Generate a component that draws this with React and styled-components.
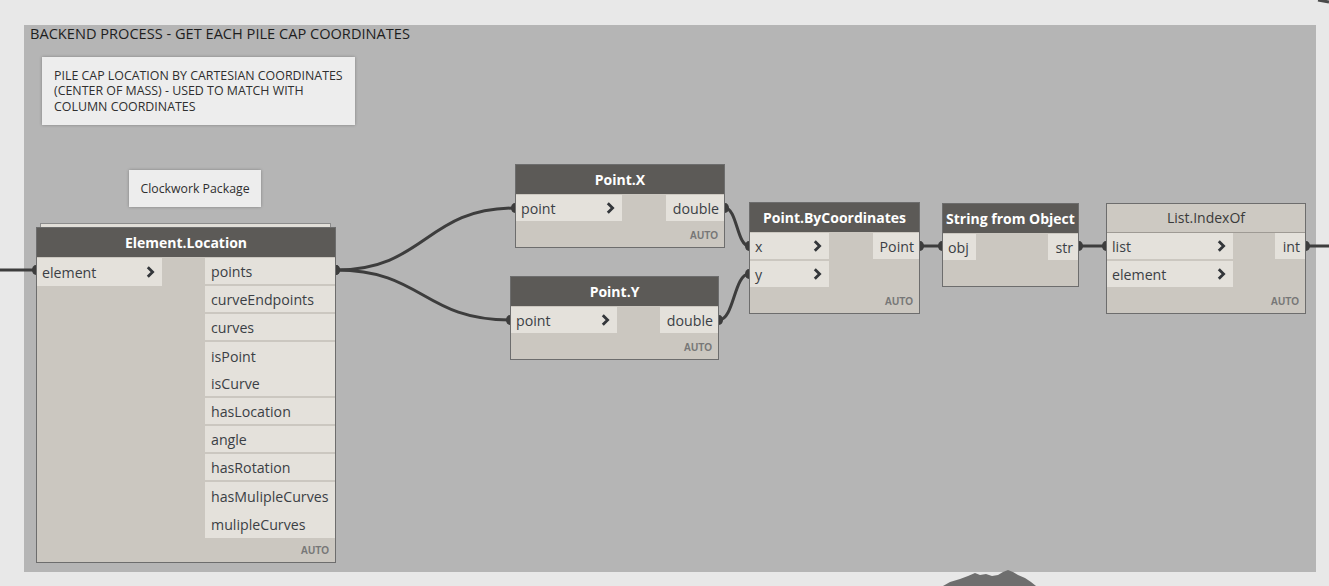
import React from "react";
import styled, { createGlobalStyle } from "styled-components";

const GlobalStyle = createGlobalStyle`
  html, body {
    margin: 0;
    padding: 0;
    background: #e8e8e8;
  }
  * {
    box-sizing: border-box;
  }
`;

const nodes = [
  {
    id: "loc",
    x: 36,
    y: 227,
    w: 300,
    title: "Element.Location",
    stacked: true,
    inW: 125,
    outW: 130,
    outLeft: true,
    auto: true,
    inputs: [{ name: "element" }],
    outputs: [
      { name: "points", sep: true },
      { name: "curveEndpoints", sep: true },
      { name: "curves", sep: true },
      { name: "isPoint" },
      { name: "isCurve", sep: true },
      { name: "hasLocation", sep: true },
      { name: "angle", sep: true },
      { name: "hasRotation", sep: true },
      { name: "hasMulipleCurves" },
      { name: "mulipleCurves" },
    ],
  },
  {
    id: "px",
    x: 515,
    y: 164,
    w: 210,
    title: "Point.X",
    inW: 106,
    outW: 58,
    auto: true,
    inputs: [{ name: "point", sep: true }],
    outputs: [{ name: "double", sep: true }],
  },
  {
    id: "py",
    x: 510,
    y: 276,
    w: 209,
    title: "Point.Y",
    inW: 106,
    outW: 58,
    auto: true,
    inputs: [{ name: "point", sep: true }],
    outputs: [{ name: "double", sep: true }],
  },
  {
    id: "pbc",
    x: 749,
    y: 202,
    w: 171,
    title: "Point.ByCoordinates",
    inW: 79,
    outW: 46,
    auto: true,
    inputs: [
      { name: "x", sep: true },
      { name: "y", sep: true },
    ],
    outputs: [{ name: "Point", sep: true }],
  },
  {
    id: "sfo",
    x: 942,
    y: 203,
    w: 137,
    title: "String from Object",
    inW: 33,
    outW: 30,
    noArrow: true,
    inputs: [{ name: "obj", sep: true }],
    outputs: [{ name: "str", sep: true }],
  },
  {
    id: "idx",
    x: 1106,
    y: 203,
    w: 200,
    title: "List.IndexOf",
    light: true,
    inW: 126,
    outW: 30,
    auto: true,
    inputs: [
      { name: "list", sep: true },
      { name: "element", sep: true },
    ],
    outputs: [{ name: "int", sep: true }],
  },
];

// start / end markers sit on the port edges, not on the canvas border
const wires = [
  { from: [-10, 270], to: [36, 270], open: "from" },
  { from: [336, 270], to: [515, 208] },
  { from: [336, 270], to: [510, 320] },
  { from: [725, 208], to: [749, 246] },
  { from: [719, 320], to: [749, 274] },
  { from: [920, 246], to: [942, 246] },
  { from: [1079, 246], to: [1106, 246] },
  { from: [1306, 246], to: [1340, 246], open: "to" },
];

const wirePath = ({ from, to }) => {
  const [x1, y1] = from;
  const [x2, y2] = to;
  const mx = (x1 + x2) / 2;
  return `M${x1},${y1} C${mx},${y1} ${mx},${y2} ${x2},${y2}`;
};

const Canvas = styled.div`
  position: relative;
  width: 1329px;
  height: 586px;
  overflow: hidden;
  background: #e8e8e8;
  font-family: "Open Sans", "Noto Sans", sans-serif;
`;

const Group = styled.div`
  position: absolute;
  left: 24px;
  top: 25px;
  width: 1292px;
  height: 547px;
  background: #b5b5b5;
`;

const GroupTitle = styled.div`
  padding: 0 0 0 6px;
  height: 17px;
  line-height: 17px;
  font-family: "Open Sans", "Noto Sans", sans-serif;
  font-size: 14.6px;
  color: #1e1e1e;
  white-space: nowrap;
`;

const Note = styled.div`
  position: absolute;
  left: ${(p) => p.$x}px;
  top: ${(p) => p.$y}px;
  width: ${(p) => p.$w}px;
  height: ${(p) => p.$h}px;
  padding: ${(p) => (p.$center ? "0" : "10px 12px")};
  display: flex;
  flex-direction: column;
  justify-content: center;
  align-items: ${(p) => (p.$center ? "center" : "flex-start")};
  background: #ededed;
  box-shadow: 0 0 3px rgba(0, 0, 0, 0.28);
  font-size: ${(p) => p.$size}px;
  line-height: 15.5px;
  color: #2f2f2f;
  white-space: nowrap;
`;

const Wires = styled.svg`
  position: absolute;
  left: 0;
  top: 0;
  width: 1329px;
  height: 586px;
`;

const NodeWrap = styled.div`
  position: absolute;
  left: ${(p) => p.$x}px;
  top: ${(p) => p.$y}px;
  width: ${(p) => p.$w}px;
`;

const StackBack = styled.div`
  position: absolute;
  left: 4px;
  right: 5px;
  top: -4px;
  height: 12px;
  background: #e2dfd9;
  border: 1px solid #8c8c8c;
`;

const NodeBox = styled.div`
  position: relative;
  display: flex;
  flex-direction: column;
  background: #cbc7c0;
  border: 1px solid #6d6d6d;
`;

const Header = styled.div`
  height: 29px;
  padding-bottom: 1px;
  display: flex;
  align-items: center;
  justify-content: center;
  background: ${(p) => (p.$light ? "#cdc9c2" : "#5c5a57")};
  border-bottom: ${(p) => (p.$light ? "1px solid #9e9a94" : "none")};
  color: ${(p) => (p.$light ? "#3a3a3a" : "#ffffff")};
  font-size: 14px;
  font-weight: ${(p) => (p.$light ? 400 : 700)};
  white-space: nowrap;
`;

const Ports = styled.div`
  display: flex;
  justify-content: space-between;
  padding-top: ${(p) => (p.$light ? 0 : 1)}px;
`;

const PortCol = styled.div`
  width: ${(p) => p.$w}px;
  display: flex;
  flex-direction: column;
`;

const PortRow = styled.div`
  height: ${(p) => (p.$sep ? 26 : 28)}px;
  margin-bottom: ${(p) => (p.$sep ? 2 : 0)}px;
  display: flex;
  align-items: center;
  justify-content: ${(p) =>
    p.$out ? (p.$left ? "flex-start" : "flex-end") : "space-between"};
  padding: ${(p) => (p.$out ? "0 5px 0 6px" : "0 7px 0 5px")};
  background: #e4e1db;
  color: #3b3f45;
  font-size: 14.2px;
  white-space: nowrap;
`;

const Footer = styled.div`
  height: 24px;
  display: flex;
  align-items: center;
  justify-content: flex-end;
  padding-right: 6px;
  font-family: "Liberation Sans Narrow", "Liberation Sans", sans-serif;
  font-size: 10px;
  font-weight: 700;
  color: #777777;
`;

const Chevron = () => (
  <svg width="9" height="12" viewBox="0 0 9 12">
    <path
      d="M1.8 1.2 L6.6 6 L1.8 10.8"
      fill="none"
      stroke="#33363a"
      strokeWidth="2.8"
    />
  </svg>
);

const Node = ({ node }) => (
  <NodeWrap $x={node.x} $y={node.y} $w={node.w}>
    {node.stacked && <StackBack />}
    <NodeBox>
      <Header $light={node.light}>{node.title}</Header>
      <Ports $light={node.light}>
        <PortCol $w={node.inW}>
          {node.inputs.map((p) => (
            <PortRow key={p.name} $sep={p.sep}>
              <span>{p.name}</span>
              {!node.noArrow && <Chevron />}
            </PortRow>
          ))}
        </PortCol>
        <PortCol $w={node.outW}>
          {node.outputs.map((p) => (
            <PortRow key={p.name} $sep={p.sep} $out $left={node.outLeft}>
              {p.name}
            </PortRow>
          ))}
        </PortCol>
      </Ports>
      <Footer>{node.auto ? "AUTO" : ""}</Footer>
    </NodeBox>
  </NodeWrap>
);

const App = () => {
  return (
    <>
      <GlobalStyle />
      <Canvas>
        <Group>
          <GroupTitle>BACKEND PROCESS - GET EACH PILE CAP COORDINATES</GroupTitle>
          <Note $x={18} $y={32} $w={313} $h={68} $size={12.4}>
            <span>PILE CAP LOCATION BY CARTESIAN COORDINATES</span>
            <span>(CENTER OF MASS) - USED TO MATCH WITH</span>
            <span>COLUMN COORDINATES</span>
          </Note>
          <Note $x={105} $y={145} $w={132} $h={37} $size={12.3} $center>
            Clockwork Package
          </Note>
        </Group>

        <Wires viewBox="0 0 1329 586">
          {wires.map((w, i) => (
            <g key={i}>
              <path
                d={wirePath(w)}
                fill="none"
                stroke="#3d3d3d"
                strokeWidth="3"
              />
              {w.open !== "from" && (
                <ellipse cx={w.from[0]} cy={w.from[1]} rx="4" ry="5" fill="#3d3d3d" />
              )}
              {w.open !== "to" && (
                <ellipse cx={w.to[0]} cy={w.to[1]} rx="4" ry="5" fill="#3d3d3d" />
              )}
            </g>
          ))}
          <path d="M1318,0 L1329,2" stroke="#4a4a4a" strokeWidth="3" />
          <polygon
            points="943,586 950,582 960,579 968,576 975,573 980,575 986,574 992,576 998,575 1003,572 1008,570 1013,572 1018,575 1025,578 1031,582 1036,586"
            fill="#6e6e6e"
          />
        </Wires>

        {nodes.map((n) => (
          <Node key={n.id} node={n} />
        ))}
      </Canvas>
    </>
  );
};

export default App;
